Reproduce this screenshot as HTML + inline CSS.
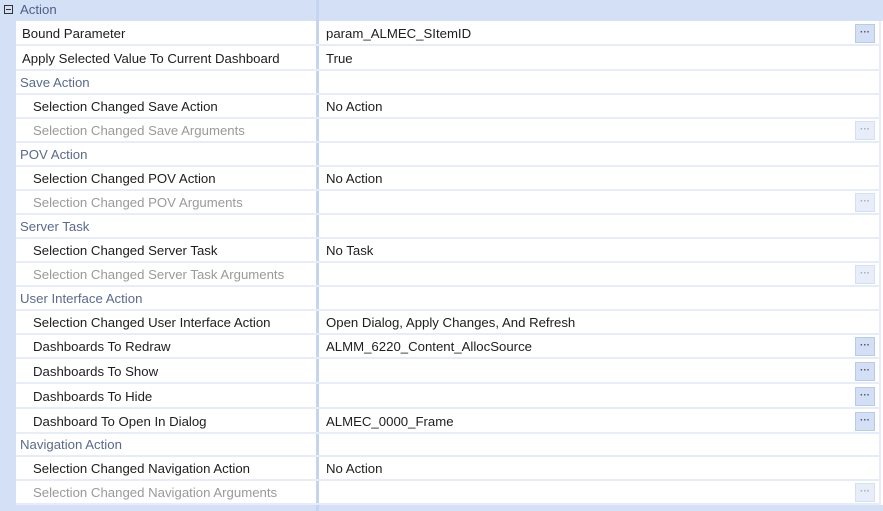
<!DOCTYPE html>
<html><head><style>
body{margin:0;width:883px;height:511px;overflow:hidden;background:#fff;font-family:"Liberation Sans",sans-serif;font-size:13.2px;position:relative}
.bg{position:absolute}
.r{position:absolute;left:16px;width:863px;height:24px;border-bottom:2px solid #e6ecf8;box-sizing:border-box}
.t{position:absolute;top:4px;white-space:nowrap;color:#1e1e1e}
.k{left:6px}.k2{left:17px}.s{left:4px;color:#5b6a8c}.d{color:#9a9a9a}
.v{left:310px}
.b{position:absolute;left:839px;top:2px;width:20px;height:19px;background:#d3dff5;border:1px solid #b9cae8;box-sizing:border-box;font-size:10px;font-weight:bold;color:#556;text-align:center;line-height:15px}
.b.dis{background:#e8eef9;border-color:#d6e0f2;color:#aab}
</style></head><body>
<div class="bg" style="left:0;top:0;width:883px;height:21px;background:#d4e0f6"></div>
<div class="bg" style="left:0;top:0;width:16px;height:511px;background:#d4e0f6"></div>
<div class="bg" style="left:0;top:505px;width:883px;height:6px;background:#d4e0f6"></div>
<div class="bg" style="left:316px;top:0;width:3px;height:511px;background:#c6d5ef"></div>
<div class="bg" style="left:879px;top:21px;width:2px;height:484px;background:#e6ecf8"></div>
<div class="bg" style="left:4px;top:5px;width:9px;height:9px;border:1px solid #333;box-sizing:border-box"></div>
<div class="bg" style="left:6px;top:9px;width:5px;height:1px;background:#333"></div>
<div class="bg" style="left:20px;top:2px;color:#4d5f86">Action</div>

<div class="r" style="top:22px"><span class="t k">Bound Parameter</span><span class="t v">param_ALMEC_SItemID</span><span class="b">···</span></div>
<div class="r" style="top:47px"><span class="t k">Apply Selected Value To Current Dashboard</span><span class="t v">True</span></div>
<div class="r" style="top:71px"><span class="t s">Save Action</span></div>
<div class="r" style="top:95px"><span class="t k2">Selection Changed Save Action</span><span class="t v">No Action</span></div>
<div class="r" style="top:119px"><span class="t k2 d">Selection Changed Save Arguments</span><span class="b dis">···</span></div>
<div class="r" style="top:143px"><span class="t s">POV Action</span></div>
<div class="r" style="top:167px"><span class="t k2">Selection Changed POV Action</span><span class="t v">No Action</span></div>
<div class="r" style="top:191px"><span class="t k2 d">Selection Changed POV Arguments</span><span class="b dis">···</span></div>
<div class="r" style="top:215px"><span class="t s">Server Task</span></div>
<div class="r" style="top:239px"><span class="t k2">Selection Changed Server Task</span><span class="t v">No Task</span></div>
<div class="r" style="top:263px"><span class="t k2 d">Selection Changed Server Task Arguments</span><span class="b dis">···</span></div>
<div class="r" style="top:287px"><span class="t s">User Interface Action</span></div>
<div class="r" style="top:311px"><span class="t k2">Selection Changed User Interface Action</span><span class="t v">Open Dialog, Apply Changes, And Refresh</span></div>
<div class="r" style="top:335px"><span class="t k2">Dashboards To Redraw</span><span class="t v">ALMM_6220_Content_AllocSource</span><span class="b">···</span></div>
<div class="r" style="top:360px"><span class="t k2">Dashboards To Show</span><span class="b">···</span></div>
<div class="r" style="top:385px"><span class="t k2">Dashboards To Hide</span><span class="b">···</span></div>
<div class="r" style="top:410px"><span class="t k2">Dashboard To Open In Dialog</span><span class="t v">ALMEC_0000_Frame</span><span class="b">···</span></div>
<div class="r" style="top:433px"><span class="t s">Navigation Action</span></div>
<div class="r" style="top:457px"><span class="t k2">Selection Changed Navigation Action</span><span class="t v">No Action</span></div>
<div class="r" style="top:481px"><span class="t k2 d">Selection Changed Navigation Arguments</span><span class="b dis">···</span></div>
</body></html>
